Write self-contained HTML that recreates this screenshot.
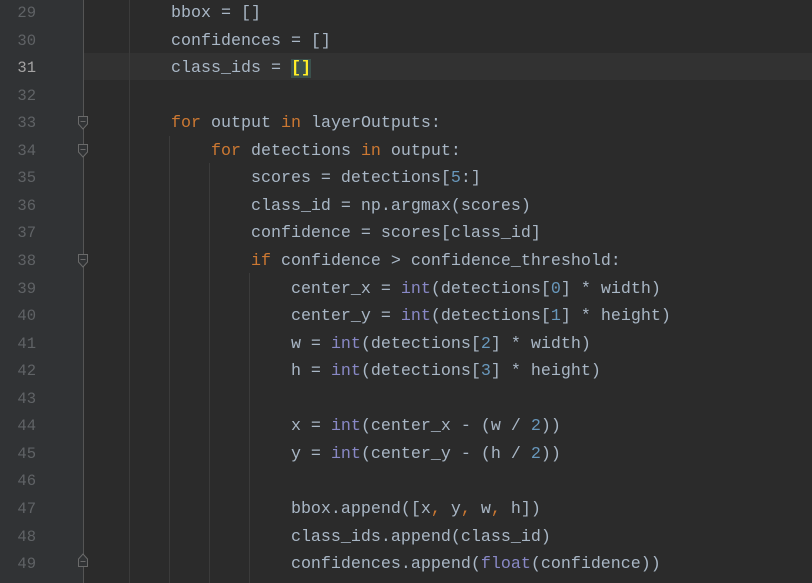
<!DOCTYPE html>
<html><head><style>
body{margin:0;width:812px;height:583px;overflow:hidden;background:#2b2b2b;position:relative;font-family:"Liberation Mono",monospace;}
.g{position:absolute;left:0;top:0;width:83px;height:583px;background:#313335;}
.gl{position:absolute;left:83px;top:0;width:1px;height:583px;background:#555;}
.cur{position:absolute;left:84px;top:53px;width:728px;height:27px;background:#323232;}
.ig{position:absolute;width:1px;background:#3b3b3b;}
.ln{position:absolute;left:0;width:36px;text-align:right;color:#606366;font-size:15.5px;line-height:27.55px;}
.c{position:absolute;left:171px;color:#a9b7c6;font-size:16.67px;line-height:27.55px;white-space:pre;}
.k{color:#cc7832}.b{color:#8888c6}.n{color:#6897bb}
.br{background:#3b514d;color:#ffef28;font-weight:bold;}
.f{position:absolute;left:77px;width:12px;height:14px;}
</style></head><body>
<div class="g"></div><div class="gl"></div>
<div class="cur"></div>
<div class="ig" style="left:129px;top:0;height:583px"></div>
<div class="ig" style="left:169px;top:136px;height:447px"></div>
<div class="ig" style="left:209px;top:163px;height:420px"></div>
<div class="ig" style="left:249px;top:273px;height:310px"></div>
<svg class="f" style="top:116px" viewBox="0 0 12 14"><path d="M1.5 0.5H10.5V8L6 13L1.5 8Z M3.5 5.5H8.5" fill="#313335" stroke="#6a6a6a"/></svg>
<svg class="f" style="top:144px" viewBox="0 0 12 14"><path d="M1.5 0.5H10.5V8L6 13L1.5 8Z M3.5 5.5H8.5" fill="#313335" stroke="#6a6a6a"/></svg>
<svg class="f" style="top:254px" viewBox="0 0 12 14"><path d="M1.5 0.5H10.5V8L6 13L1.5 8Z M3.5 5.5H8.5" fill="#313335" stroke="#6a6a6a"/></svg>
<svg class="f" style="top:553px" viewBox="0 0 12 14"><path d="M1.5 13.5H10.5V6L6 1L1.5 6Z M3.5 8.5H8.5" fill="#313335" stroke="#6a6a6a"/></svg>

<div class="ln" style="top:0px">29</div>
<div class="ln" style="top:27.5px">30</div>
<div class="ln" style="top:55px;color:#a4a3a3">31</div>
<div class="ln" style="top:82.6px">32</div>
<div class="ln" style="top:110.2px">33</div>
<div class="ln" style="top:137.7px">34</div>
<div class="ln" style="top:165.3px">35</div>
<div class="ln" style="top:192.8px">36</div>
<div class="ln" style="top:220.4px">37</div>
<div class="ln" style="top:247.9px">38</div>
<div class="ln" style="top:275.5px">39</div>
<div class="ln" style="top:303px">40</div>
<div class="ln" style="top:330.6px">41</div>
<div class="ln" style="top:358.2px">42</div>
<div class="ln" style="top:385.7px">43</div>
<div class="ln" style="top:413.3px">44</div>
<div class="ln" style="top:440.8px">45</div>
<div class="ln" style="top:468.4px">46</div>
<div class="ln" style="top:495.9px">47</div>
<div class="ln" style="top:523.5px">48</div>
<div class="ln" style="top:551px">49</div>

<div class="c" style="top:0px">bbox = []</div>
<div class="c" style="top:27.5px">confidences = []</div>
<div class="c" style="top:55px">class_ids = <span class="br">[]</span></div>
<div class="c" style="top:110.2px"><span class="k">for</span> output <span class="k">in</span> layerOutputs:</div>
<div class="c" style="top:137.7px">    <span class="k">for</span> detections <span class="k">in</span> output:</div>
<div class="c" style="top:165.3px">        scores = detections[<span class="n">5</span>:]</div>
<div class="c" style="top:192.8px">        class_id = np.argmax(scores)</div>
<div class="c" style="top:220.4px">        confidence = scores[class_id]</div>
<div class="c" style="top:247.9px">        <span class="k">if</span> confidence &gt; confidence_threshold:</div>
<div class="c" style="top:275.5px">            center_x = <span class="b">int</span>(detections[<span class="n">0</span>] * width)</div>
<div class="c" style="top:303px">            center_y = <span class="b">int</span>(detections[<span class="n">1</span>] * height)</div>
<div class="c" style="top:330.6px">            w = <span class="b">int</span>(detections[<span class="n">2</span>] * width)</div>
<div class="c" style="top:358.2px">            h = <span class="b">int</span>(detections[<span class="n">3</span>] * height)</div>
<div class="c" style="top:413.3px">            x = <span class="b">int</span>(center_x - (w / <span class="n">2</span>))</div>
<div class="c" style="top:440.8px">            y = <span class="b">int</span>(center_y - (h / <span class="n">2</span>))</div>
<div class="c" style="top:495.9px">            bbox.append([x<span class="k">,</span> y<span class="k">,</span> w<span class="k">,</span> h])</div>
<div class="c" style="top:523.5px">            class_ids.append(class_id)</div>
<div class="c" style="top:551px">            confidences.append(<span class="b">float</span>(confidence))</div>
</body></html>
